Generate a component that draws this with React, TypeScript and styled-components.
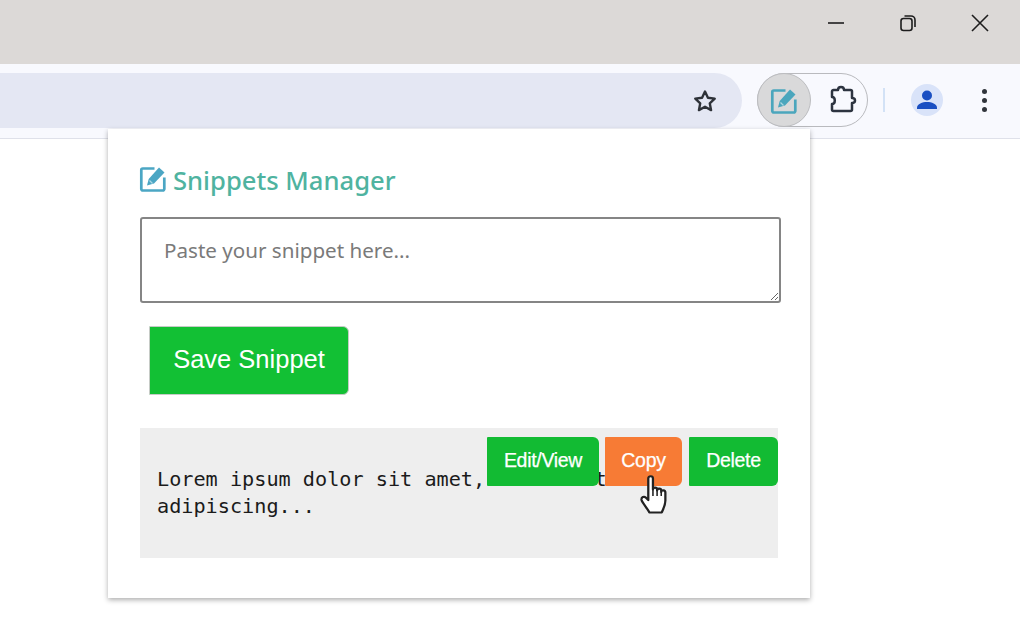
import React from "react";
import styled, { createGlobalStyle } from "styled-components";

const Global = createGlobalStyle`
  html, body { margin: 0; padding: 0; background: #fff; overflow: hidden; }
  * { box-sizing: border-box; }
`;

const Screen = styled.div`
  position: relative;
  width: 1020px;
  height: 638px;
  display: flex;
  flex-direction: column;
  background: #fff;
`;

const TitleBar = styled.div`
  height: 64px;
  flex: none;
  background: #dcd9d7;
  display: flex;
  justify-content: flex-end;
  padding: 0 4px 18px 0;
  align-items: center;
`;

const WindowButton = styled.div`
  width: 72px;
  height: 46px;
  display: flex;
  align-items: center;
  justify-content: center;
  color: #1d1d1d;
`;

const Toolbar = styled.div`
  height: 75px;
  flex: none;
  background: #f8f9fe;
  border-bottom: 1px solid #dfe1ea;
  display: flex;
  align-items: flex-start;
  padding-top: 9px;
`;

const AddressBar = styled.div`
  width: 742px;
  height: 55px;
  flex: none;
  background: #e4e7f3;
  border-radius: 0 28px 28px 0;
  display: flex;
  align-items: center;
  justify-content: flex-end;
  padding-right: 24px;
`;

const ExtensionPill = styled.div`
  width: 111px;
  height: 54px;
  margin-left: 15px;
  flex: none;
  border: 1px solid #b9babe;
  border-radius: 27px;
  display: flex;
  align-items: center;
`;

const ActiveExtension = styled.div`
  width: 54px;
  height: 54px;
  margin: -1px 0 0 -1px;
  flex: none;
  border-radius: 50%;
  background: #d9d9da;
  border: 1px solid #bcbdc0;
  display: flex;
  align-items: center;
  justify-content: center;
  color: #4ba6bd;
`;

const PuzzleSlot = styled.div`
  flex: 1;
  display: flex;
  justify-content: center;
  padding-left: 8px;
`;

const Separator = styled.div`
  width: 2px;
  height: 24px;
  margin: 15px 0 0 15px;
  flex: none;
  background: #d3e2f6;
`;

const Avatar = styled.div`
  width: 32px;
  height: 32px;
  margin: 11px 0 0 26px;
  flex: none;
  border-radius: 50%;
  background: #d9e3f9;
  display: flex;
  align-items: center;
  justify-content: center;
`;

const MenuDots = styled.div`
  width: 5px;
  height: 23px;
  margin: 16px 0 0 39px;
  flex: none;
  display: flex;
  flex-direction: column;
  justify-content: space-between;
`;

const Dot = styled.span`
  width: 5px;
  height: 5px;
  border-radius: 50%;
  background: #31353c;
`;

const Popup = styled.div`
  position: absolute;
  left: 108px;
  top: 129px;
  width: 702px;
  height: 469px;
  background: #fff;
  box-shadow: 0 2px 5px rgba(0, 0, 0, 0.32);
  padding: 32px 29px 0 32px;
  display: flex;
  flex-direction: column;
`;

const Heading = styled.h1`
  margin: 0;
  height: 40px;
  display: flex;
  align-items: center;
  gap: 6px;
  font: 500 25.6px/40px "Noto Sans", sans-serif;
  color: #4fb3a0;
  svg { color: #4ba6c4; margin: -6px 0 0 -1px; }
`;

const SnippetInput = styled.textarea`
  display: block;
  width: 641px;
  height: 86px;
  margin-top: 16px;
  padding: 17px 22px;
  border: 2px solid #858585;
  border-radius: 3px;
  outline: none;
  font: 400 20.6px/28px "Noto Sans", sans-serif;
  color: #222;
  &::placeholder { color: #7a7a7a; opacity: 1; }
`;

const SaveButton = styled.button`
  align-self: flex-start;
  width: 200px;
  height: 69px;
  margin: 23px 0 0 9px;
  padding: 0 0 2px;
  border: 1px solid #c6cbc6;
  border-radius: 1px 6px 6px 1px;
  background: #12c034;
  color: #fff;
  font: 400 25.5px "Liberation Sans", Arial, sans-serif;
`;

const SnippetCard = styled.div`
  position: relative;
  width: 638px;
  height: 130px;
  margin-top: 33px;
  background: #eeeeee;
  padding: 38px 17px 0;
`;

const SnippetText = styled.pre`
  margin: 0;
  white-space: pre-wrap;
  font: 400 20.2px/27px "DejaVu Sans Mono", monospace;
  color: #1b1b1b;
`;

const ActionRow = styled.div`
  position: absolute;
  top: 9px;
  right: 0;
  display: flex;
  gap: 6px;
`;

const ActionButton = styled.button<{ $accent?: boolean; $width: number }>`
  width: ${(p) => p.$width}px;
  height: 49px;
  padding: 0 0 2px;
  border: none;
  border-radius: 1px 6px 6px 1px;
  background: ${(p) => (p.$accent ? "#f77b35" : "#12bb33")};
  color: #fff;
  font: 400 19.5px "Liberation Sans", Arial, sans-serif;
  letter-spacing: -0.3px;
  -webkit-text-stroke: 0.25px #fff;
  &:last-child { margin-left: 1px; }
`;

const Cursor = styled.svg`
  position: absolute;
  left: 640px;
  top: 475px;
`;

function EditIcon({ size }: { size: number }) {
  return (
    <svg width={size} height={size} viewBox="0 0 28 28">
      <path
        d="M15.500 4.500H3.800a1.500 1.500 0 0 0-1.500 1.500v19a1.500 1.500 0 0 0 1.500 1.500h20a1.500 1.500 0 0 0 1.500-1.500V13.500"
        fill="none"
        stroke="currentColor"
        strokeWidth="2.700"
      />
      <path d="M8 21.500l1.700-6.500L20 3.500l5.500 5L15 19.500z" fill="currentColor" />
      <path d="M10.500 16.500l3 3" stroke="#fff" strokeOpacity="0.55" strokeWidth="1.200" />
    </svg>
  );
}

export default function App() {
  return (
    <Screen>
      <Global />
      <TitleBar>
        <WindowButton>
          <svg width="18" height="18" viewBox="0 0 18 18"><path d="M1 9h16" stroke="currentColor" strokeWidth="1.6" /></svg>
        </WindowButton>
        <WindowButton>
          <svg width="18" height="18" viewBox="0 0 18 18" fill="none" stroke="currentColor" strokeWidth="1.6">
            <rect x="2" y="4.500" width="11" height="12" rx="2.500" />
            <path d="M5.500 2h6.500a4 4 0 0 1 4 4v7" />
          </svg>
        </WindowButton>
        <WindowButton>
          <svg width="18" height="18" viewBox="0 0 18 18"><path d="M1 1l16 16M17 1L1 17" stroke="currentColor" strokeWidth="1.6" /></svg>
        </WindowButton>
      </TitleBar>
      <Toolbar>
        <AddressBar>
          <svg width="26" height="26" viewBox="0 0 24 24" fill="none" stroke="#2e3238" strokeWidth="2.2" strokeLinejoin="round">
            <path d="M12 3.200l2.700 5.800 6.300.8-4.600 4.300 1.200 6.300L12 17.300l-5.600 3.100 1.200-6.300L3 9.800l6.300-.8z" />
          </svg>
        </AddressBar>
        <ExtensionPill>
          <ActiveExtension>
            <EditIcon size={28} />
          </ActiveExtension>
          <PuzzleSlot>
            <svg width="30" height="30" viewBox="0 0 30 30" fill="none" stroke="#2d3440" strokeWidth="2.5" strokeLinejoin="round">
              <path d="M5.500 5H10c0-1 .5-3 3-3s3 2 3 3h6.500A1.500 1.500 0 0 1 24 6.500V13c1 0 3 .5 3 2.500S25 18 24 18v6.500a1.500 1.500 0 0 1-1.500 1.500h-17A1.500 1.500 0 0 1 4 24.500V19c1.800 0 2.800-1.500 2.800-3.500S5.800 12 4 12V6.500A1.500 1.500 0 0 1 5.500 5z" />
            </svg>
          </PuzzleSlot>
        </ExtensionPill>
        <Separator />
        <Avatar>
          <svg width="24" height="24" viewBox="0 0 24 24" fill="#1a4fc2">
            <circle cx="12" cy="7.500" r="5" />
            <path d="M2 21v-1.500c0-3.500 5.500-5.500 10-5.500s10 2 10 5.500V21z" />
          </svg>
        </Avatar>
        <MenuDots>
          <Dot />
          <Dot />
          <Dot />
        </MenuDots>
      </Toolbar>
      <Popup>
        <Heading>
          <EditIcon size={28} />
          Snippets Manager
        </Heading>
        <SnippetInput placeholder="Paste your snippet here..." />
        <SaveButton>Save Snippet</SaveButton>
        <SnippetCard>
          <SnippetText>Lorem ipsum dolor sit amet, consectetur adipiscing...</SnippetText>
          <ActionRow>
            <ActionButton $width={112}>Edit/View</ActionButton>
            <ActionButton $accent $width={77}>Copy</ActionButton>
            <ActionButton $width={89}>Delete</ActionButton>
          </ActionRow>
        </SnippetCard>
      </Popup>
      <Cursor width="29" height="40" viewBox="0 0 28 40" preserveAspectRatio="none">
        <path
          d="M8 3.500c0-3 4.500-3 4.500 0v11c0-2.500 4-2.500 4 0v1c0-2.500 4-2.500 4 0v1.500c0-2.500 4-2 4 .5v8c0 5-3 10.500-3.500 12H9c-1-3-7-10-7.500-12.500-.5-3 2.500-4 4-2.500L8 25z"
          fill="#fff"
          stroke="#222"
          strokeWidth="2.200"
          strokeLinejoin="round"
        />
        <path d="M12.500 15v6M16.500 16v5M20.500 17v4" stroke="#222" strokeWidth="1.500" fill="none" />
      </Cursor>
    </Screen>
  );
}
